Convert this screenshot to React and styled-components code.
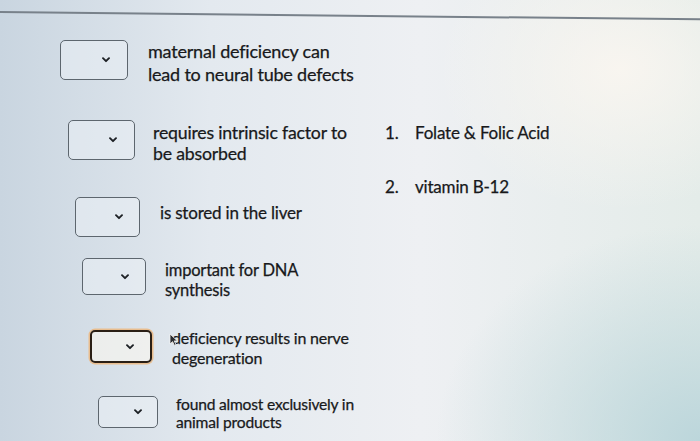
import React from 'react';
import styled, { createGlobalStyle } from 'styled-components';

const GlobalStyle = createGlobalStyle`
  html, body {
    margin: 0;
    padding: 0;
  }
  body {
    font-family: Lato, "Open Sans", sans-serif;
    color: #18191b;
  }
`;

const Screen = styled.div`
  width: 700px;
  height: 441px;
  overflow: hidden;
  box-sizing: border-box;
  padding-top: 11px;
  background:
    radial-gradient(ellipse 260px 200px at 620px 70px, rgba(250, 246, 240, 0.9), rgba(250, 246, 240, 0) 70%),
    radial-gradient(ellipse 330px 270px at 700px 441px, #bcd6db, rgba(188, 214, 219, 0) 80%),
    linear-gradient(90deg, #c9d5e0 0%, #e3e9ef 30%, #eef0f3 60%, #e4ece9 100%);
`;

const Divider = styled.div`
  height: 2px;
  background: #78818a;
  transform: rotate(0.6deg);
  transform-origin: left center;
  margin: 0 -4px;
`;

const Body = styled.div`
  display: flex;
`;

const Prompts = styled.div`
  width: 385px;
  flex-shrink: 0;
  display: flex;
  flex-direction: column;
  padding-top: 27px;
`;

const Row = styled.div`
  display: flex;
  align-items: flex-start;
  height: ${p => p.$h}px;
  margin-top: ${p => p.$gap}px;
  padding-left: ${p => p.$indent}px;
  gap: ${p => p.$space}px;
`;

const Select = styled.div`
  width: ${p => p.$w}px;
  height: ${p => p.$h}px;
  flex-shrink: 0;
  box-sizing: border-box;
  border: ${p => (p.$focused ? '2px solid #2a1f15' : '1.5px solid #5d666e')};
  border-radius: 5px;
  background: ${p => (p.$focused ? 'rgba(252, 248, 240, 0.6)' : 'rgba(240, 245, 249, 0.45)')};
  box-shadow: ${p => (p.$focused ? '0 0 0 1.5px #e9bd8e' : 'none')};
  display: flex;
  align-items: center;
  justify-content: flex-end;
  padding-right: ${p => Math.round(p.$w * 0.25)}px;
`;

const Chevron = () => (
  <svg width="8" height="6" viewBox="0 0 8 6">
    <path d="M1 1.2l3 3 3-3" fill="none" stroke="#1d2125" strokeWidth="1.9" strokeLinecap="round" strokeLinejoin="round" />
  </svg>
);

const Prompt = styled.div`
  position: relative;
  font-size: ${p => p.$size}px;
  line-height: ${p => p.$lh}px;
  margin-top: ${p => p.$shift}px;
  letter-spacing: -0.2px;
  -webkit-text-stroke: 0.25px currentColor;
  white-space: nowrap;
`;

const Pointer = styled.svg`
  position: absolute;
  left: -3px;
  top: 5px;
`;

const Cursor = () => (
  <Pointer width="9" height="13" viewBox="0 0 9 13">
    <path d="M1 1v10l2.6-2.4 1.8 3.8 1.6-.8-1.8-3.7H8.4z" fill="#2a2b2e" stroke="#f4f4f4" strokeWidth="0.8" strokeLinejoin="round" />
  </Pointer>
);

const Options = styled.ol`
  list-style: none;
  margin: 0;
  padding: 108px 0 0 0;
  display: flex;
  flex-direction: column;
  gap: 30px;
`;

const Option = styled.li`
  display: flex;
  gap: 16px;
  font-size: 17px;
  line-height: 24px;
  letter-spacing: -0.2px;
  -webkit-text-stroke: 0.25px currentColor;
`;

const Num = styled.span`
  width: 14px;
`;

const rows = [
  { text: ['maternal deficiency can', 'lead to neural tube defects'], indent: 60, gap: 0, w: 68, h: 40, size: 18, lh: 23, shift: 0, space: 20 },
  { text: ['requires intrinsic factor to', 'be absorbed'], indent: 68, gap: 40, w: 67, h: 40, size: 17.7, lh: 21, shift: 2, space: 18 },
  { text: ['is stored in the liver'], indent: 75, gap: 37, w: 65, h: 40, size: 17, lh: 22, shift: 5, space: 20 },
  { text: ['important for DNA', 'synthesis'], indent: 82, gap: 21, w: 64, h: 37, size: 16.5, lh: 20, shift: 2, space: 19 },
  { text: ['deficiency results in nerve', 'degeneration'], indent: 90, gap: 35, w: 62, h: 33, size: 16, lh: 20, shift: -2, space: 20, focused: true },
  { text: ['found almost exclusively in', 'animal products'], indent: 98, gap: 33, w: 60, h: 32, size: 15.6, lh: 18, shift: -1, space: 18 },
];

const options = [
  { n: '1.', label: 'Folate & Folic Acid' },
  { n: '2.', label: 'vitamin B-12' },
];

export default function App() {
  return (
    <>
      <GlobalStyle />
      <Screen>
        <Divider />
        <Body>
          <Prompts>
            {rows.map((r, i) => (
              <Row key={i} $h={r.h} $gap={r.gap} $indent={r.indent} $space={r.space}>
                <Select $w={r.w} $h={r.h} $focused={r.focused}>
                  <Chevron />
                </Select>
                <Prompt $size={r.size} $lh={r.lh} $shift={r.shift}>
                  {r.text.map((t, j) => (
                    <div key={j}>{t}</div>
                  ))}
                  {r.focused && <Cursor />}
                </Prompt>
              </Row>
            ))}
          </Prompts>
          <Options>
            {options.map(o => (
              <Option key={o.n}>
                <Num>{o.n}</Num>
                <span>{o.label}</span>
              </Option>
            ))}
          </Options>
        </Body>
      </Screen>
    </>
  );
}
